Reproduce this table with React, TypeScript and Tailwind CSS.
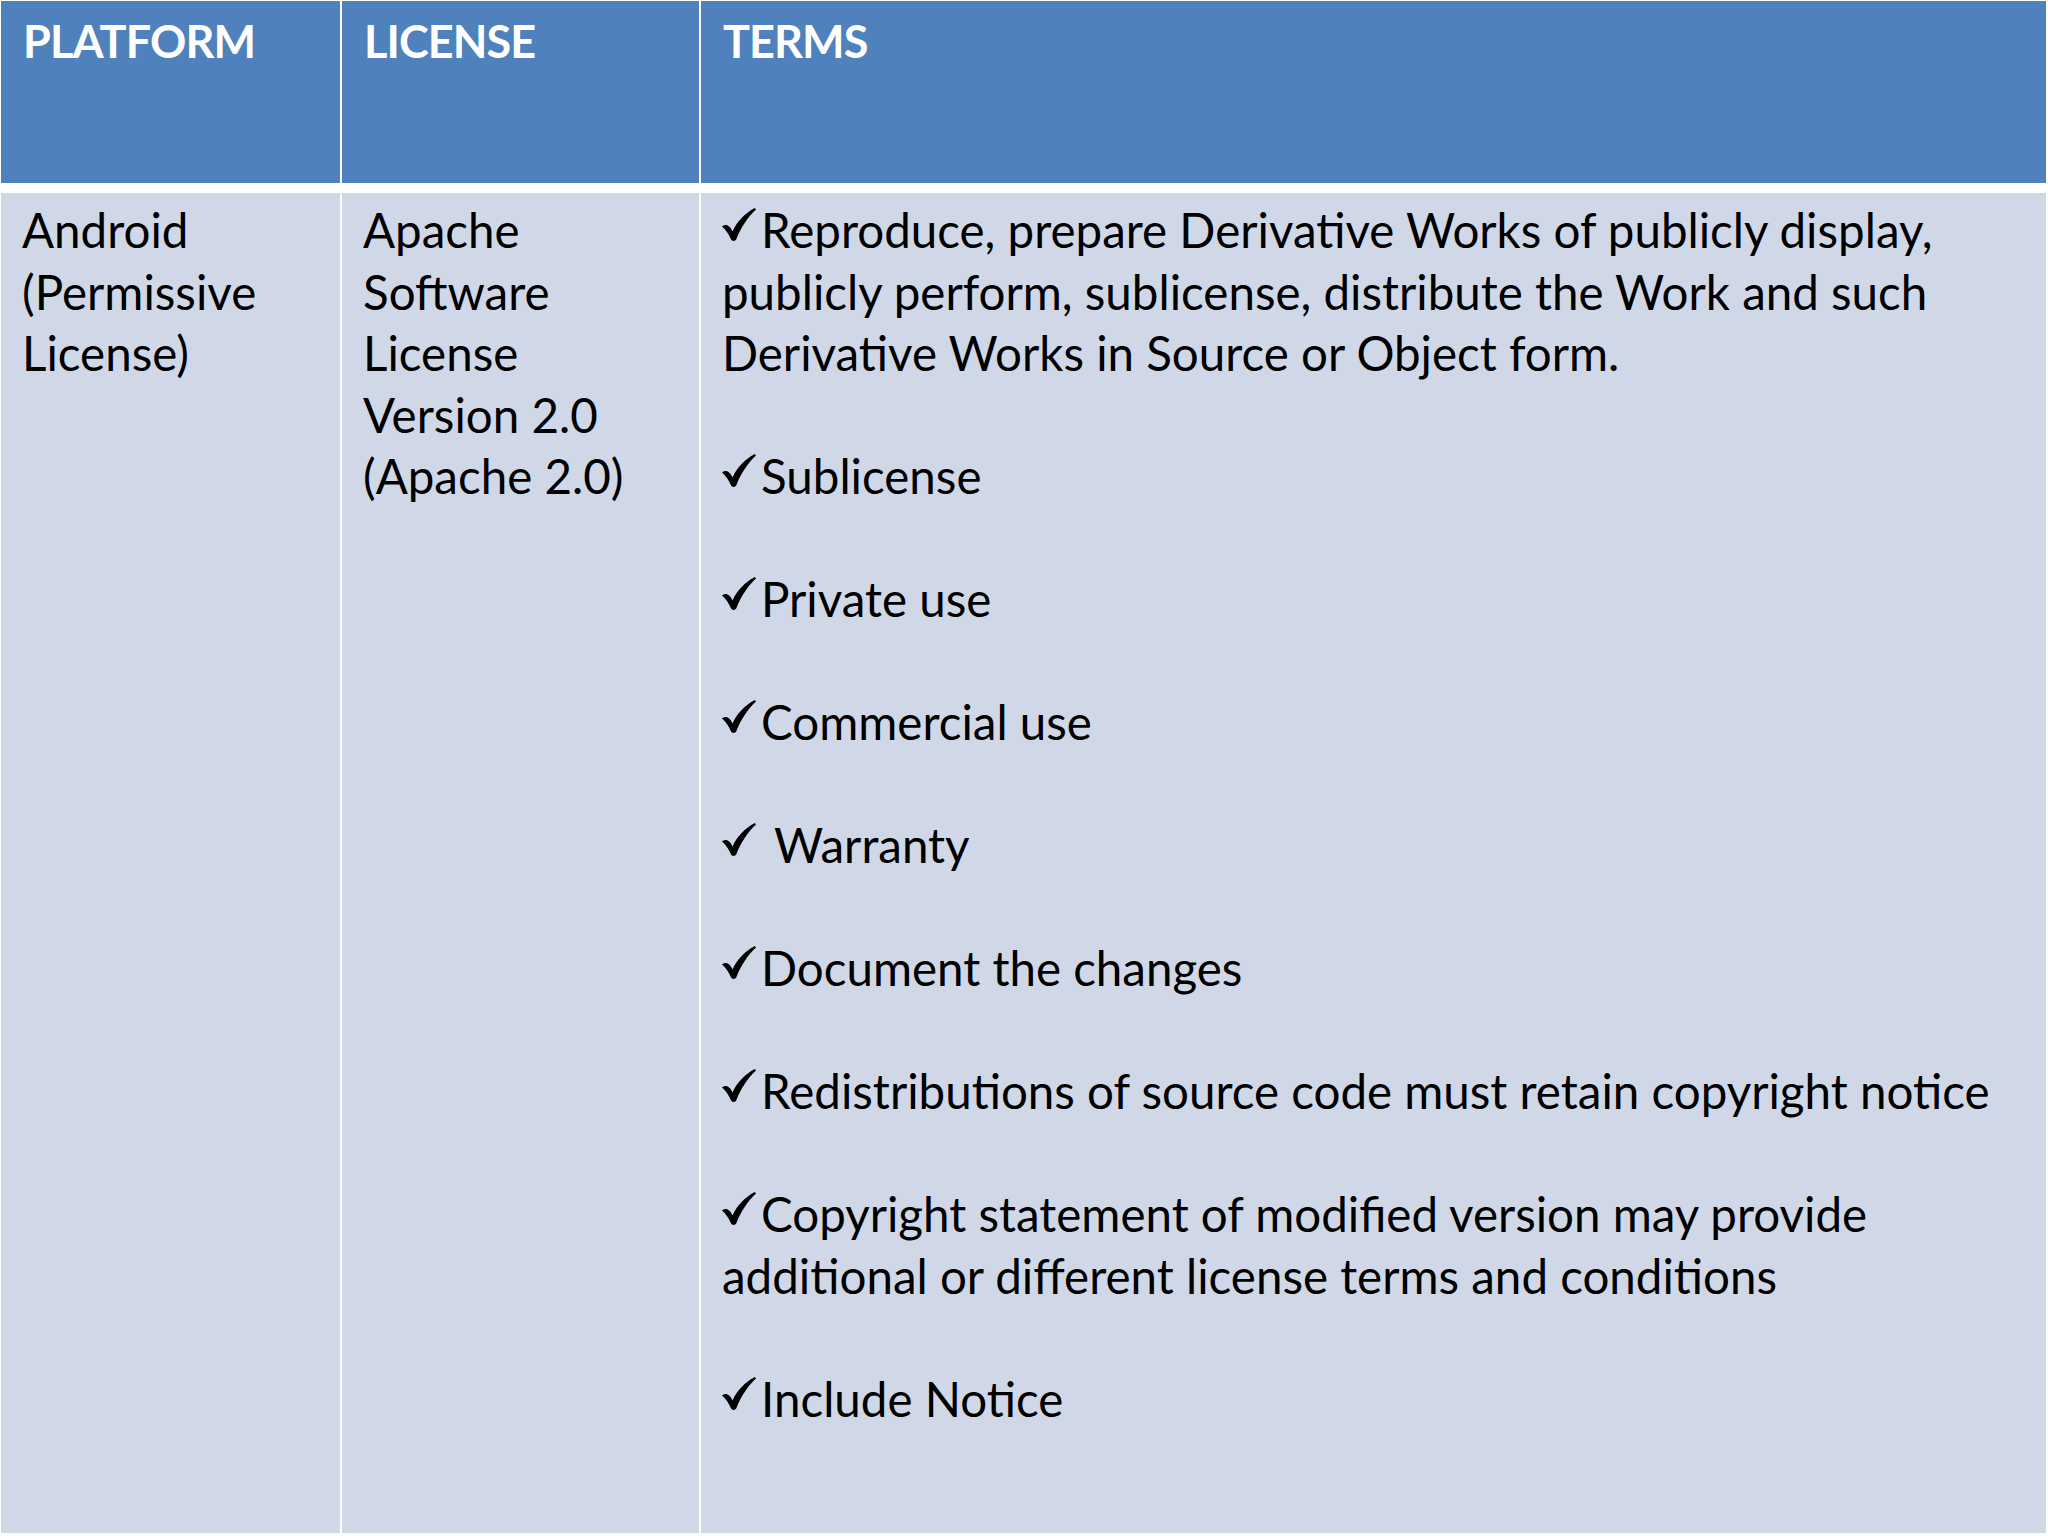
import React from 'react';

const Check = () => (
  <svg
    viewBox="0 0 34 33"
    className="inline-block w-[34px] h-[33px] align-[7px] mr-[5px]"
    aria-hidden="true"
  >
    <path
      d="M0 18.5 C3.5 15.5 7 17 9.5 21.5 L10.5 23.5 C15 13.5 23 5 32.8 0 L34 1.6 C25.5 9.5 19 19.5 14.2 31.5 C13.5 33.2 10 33.4 9.2 31.8 C7 26.5 4 22 0 18.5 Z"
      fill="#000"
    />
  </svg>
);

const terms: { lines: string[]; spaced?: boolean }[] = [
  {
    lines: [
      'Reproduce, prepare Derivative Works of publicly display,',
      'publicly perform, sublicense, distribute the Work and such',
      'Derivative Works in Source or Object form.',
    ],
  },
  { lines: ['Sublicense'] },
  { lines: ['Private use'] },
  { lines: ['Commercial use'] },
  { lines: ['Warranty'], spaced: true },
  { lines: ['Document the changes'] },
  { lines: ['Redistributions of source code must retain copyright notice'] },
  {
    lines: [
      'Copyright statement of modified version may provide',
      'additional or different license terms and conditions',
    ],
  },
  { lines: ['Include Notice'] },
];

const headCell = 'bg-[#4f81bd] text-white font-bold text-[45px] tracking-[-0.9px] pl-[22px] pt-[10px]';
const bodyCell = 'bg-[#d0d8e8] text-black pl-[21px] pt-[6px]';

export default function App() {
  return (
    <div className="w-[2048px] h-[1536px] bg-white pt-px pl-px pr-[2px] pb-[3px] font-[family-name:Lato,sans-serif] text-[47.5px] leading-[61.5px]">
      <div className="grid h-full grid-cols-[339px_357px_1fr] grid-rows-[182px_1fr] gap-x-[2px] gap-y-[10px]">
        <div className={headCell}>PLATFORM</div>
        <div className={headCell}>LICENSE</div>
        <div className={headCell}>TERMS</div>

        <div className={bodyCell}>
          <div>Android</div>
          <div>(Permissive</div>
          <div>License)</div>
        </div>
        <div className={bodyCell}>
          <div>Apache</div>
          <div>Software</div>
          <div>License</div>
          <div>Version 2.0</div>
          <div>(Apache 2.0)</div>
        </div>
        <div className={bodyCell}>
          {terms.map((t, i) => (
            <div key={i} className="mb-[61.5px] whitespace-nowrap">
              {t.lines.map((line, j) => (
                <div key={j}>
                  {j === 0 && <Check />}
                  {j === 0 && t.spaced && <span className="inline-block w-[13px]" />}
                  {line}
                </div>
              ))}
            </div>
          ))}
        </div>
      </div>
    </div>
  );
}
